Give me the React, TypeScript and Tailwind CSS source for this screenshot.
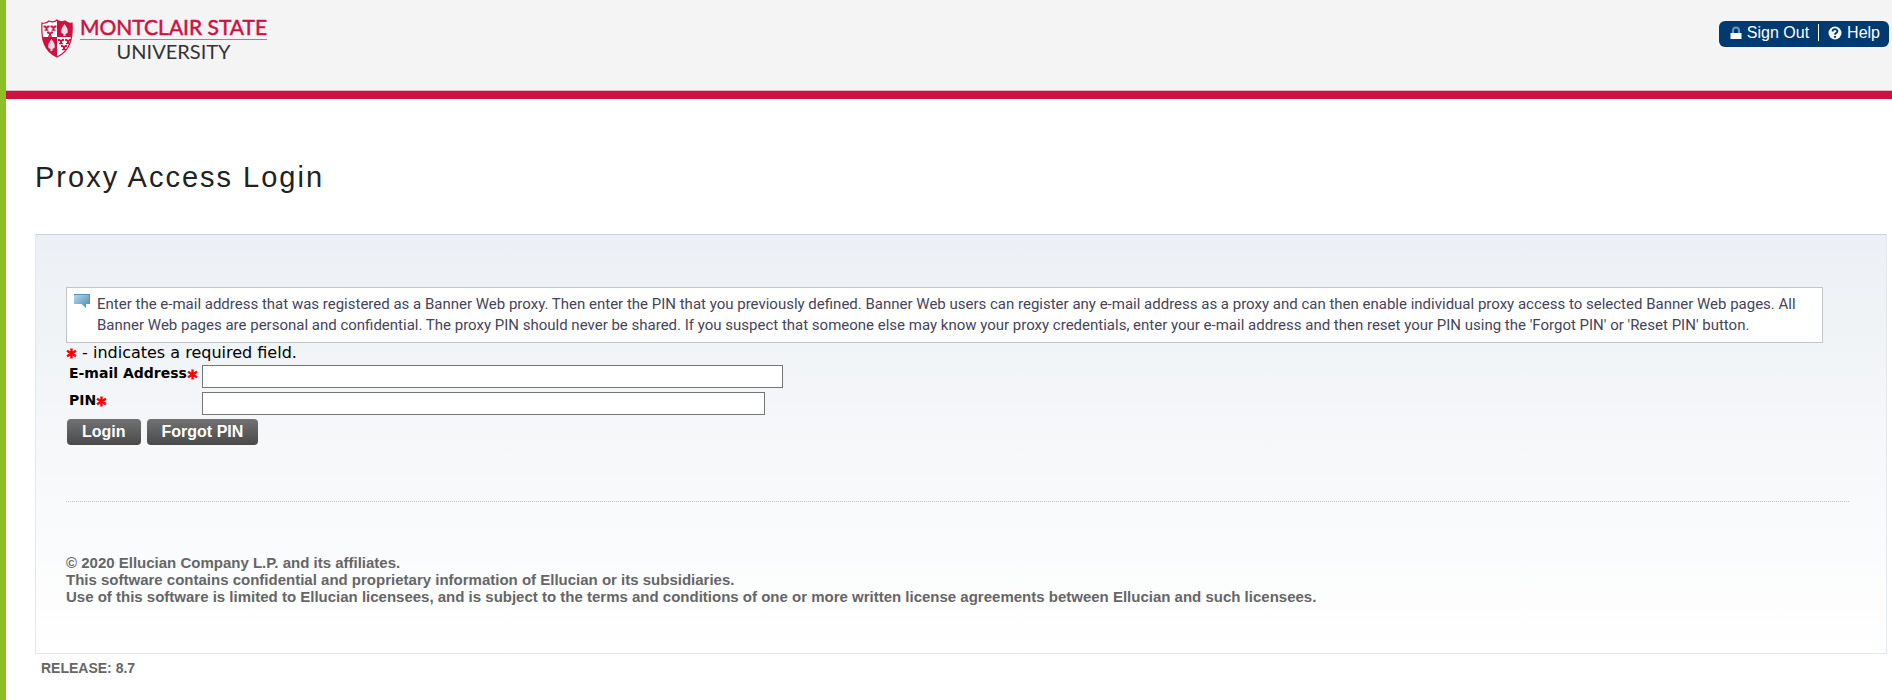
import React from "react";

function Shield() {
  return (
    <svg className="h-10 w-8 shrink-0" viewBox="0 0 32 40" aria-hidden="true">
      <defs>
        <clipPath id="shield">
          <path d="M1 4Q5 5 8 2Q13 4 16 1Q19 4 24 2Q27 5 31 4C32 20 29 32 16 38C3 32 0 20 1 4Z" />
        </clipPath>
        <g id="eagle">
          <path d="M0 0h2l.7 1h.6L4 0h2v1.800L4 2.500v1.500h1v1.300H1V4h1V2.500L0 1.800z" />
        </g>
      </defs>
      <g clipPath="url(#shield)">
        <path fill="#fff" d="M0 0h32v40H0z" />
        <path fill="#cf1141" d="M16 0h16v18H16zM0 18h16v22H0z" />
        <g fill="#cf1141">
          <use href="#eagle" x="2.500" y="6.500" />
          <use href="#eagle" x="9.500" y="6.500" />
          <use href="#eagle" x="6" y="12.500" />
          <use href="#eagle" x="17" y="20" />
          <use href="#eagle" x="24" y="20" />
          <use href="#eagle" x="20" y="26" />
        </g>
        <g fill="#fff" opacity=".85">
          <path d="M23.500 5c2 3 4 5 3 9l-2 1v2h-2v-2l-2-1c-1-4 1-6 3-9z" />
          <path d="M10.500 20c2 3 4 5 3 9l-2 1v2h-2v-2l-2-1c-1-4 1-6 3-9z" />
        </g>
      </g>
      <path
        fill="none"
        stroke="#cf1141"
        strokeWidth="1.200"
        d="M1 4Q5 5 8 2Q13 4 16 1Q19 4 24 2Q27 5 31 4C32 20 29 32 16 38C3 32 0 20 1 4Z"
      />
    </svg>
  );
}

function Logo() {
  return (
    <div className="flex items-start gap-[7px]">
      <Shield />
      <div className="-mt-1 flex flex-col items-center font-['Lato',sans-serif] whitespace-nowrap">
        <span className="border-b border-[#8c8c8c] text-[21px] leading-6 text-[#cf1141] [-webkit-text-stroke:0.5px_#cf1141]">
          MONTCLAIR STATE
        </span>
        <span className="text-[20px] leading-[23px] text-[#333333]">UNIVERSITY</span>
      </div>
    </div>
  );
}

function Required() {
  return (
    <svg className="inline-block size-[11px]" viewBox="0 0 11 11" role="img" aria-label="Required">
      <path
        stroke="#ff0000"
        strokeWidth="2.400"
        d="M5.500 0.500v10M1 2.800l9 5.400M10 2.800l-9 5.400"
      />
    </svg>
  );
}

function LockIcon() {
  return (
    <svg className="h-3.5 w-3" viewBox="0 0 12 14" aria-hidden="true">
      <path fill="none" stroke="#6d94bb" strokeWidth="2" d="M3 8V4.500a3 3 0 0 1 6 0v3.500" />
      <path fill="#fff" d="M.5 7h11v6H.5z" />
    </svg>
  );
}

function HelpIcon() {
  return (
    <svg className="size-3.5" viewBox="0 0 14 14" aria-hidden="true">
      <circle cx="7" cy="7" r="6.500" fill="#f4f8fc" />
      <path
        fill="none"
        stroke="#003a70"
        strokeWidth="1.900"
        d="M4.600 5.400C4.600 2.400 9.400 2.400 9.400 5.200 9.400 7 7 6.800 7 8.800"
      />
      <path fill="#003a70" d="M6 10h2v1.800H6z" />
    </svg>
  );
}

function NoteIcon() {
  return (
    <svg className="h-3.5 w-4 shrink-0" viewBox="0 0 16 14" aria-hidden="true">
      <defs>
        <linearGradient id="note" x1="0" y1="0" x2="1" y2="1">
          <stop offset="0" stopColor="#b9dcec" />
          <stop offset="1" stopColor="#4488b4" />
        </linearGradient>
      </defs>
      <path fill="url(#note)" d="M0 0h16v10h-4v4L7.500 10H0z" />
      <path fill="none" stroke="#5794b8" d="M0 .5h15.500V10" />
    </svg>
  );
}

const labelClass =
  "pl-[3px] text-left align-top font-bold text-sm leading-[17px] whitespace-nowrap";
const fieldClass = "block h-[23px] border border-[#767676] bg-white px-1 text-[13px]";
const buttonClass =
  "h-[26px] rounded-[4px] bg-linear-to-b from-[#727272] to-[#4a4a4a] px-[15px] font-['Liberation_Sans',sans-serif] text-base leading-[26px] font-bold text-white";

export default function App() {
  return (
    <div className="min-h-screen border-l-[6px] border-[#8cbf26] bg-white font-['Liberation_Sans',Arial,sans-serif]">
      <header className="border-b-8 border-[#cf1141] bg-[#f4f4f4]">
        <div className="flex h-[91px] items-start justify-between border-b border-[#e3b8c3] pr-[3px] pl-[35px]">
          <div className="pt-[19px]">
            <Logo />
          </div>
          <nav className="mt-[21px] flex h-[26px] items-start rounded-[6px] bg-[#003a70] pr-[9px] pl-[11px] text-base leading-6 text-white">
            <a href="#signout" className="flex items-center gap-[5px] pr-[9px]">
              <LockIcon />
              Sign Out
            </a>
            <span className="mt-[3px] h-[17px] w-px bg-white" />
            <a href="#help" className="flex items-center gap-[5px] pl-[9px]">
              <HelpIcon />
              Help
            </a>
          </nav>
        </div>
      </header>

      <main className="pr-[5px] pl-[29px]">
        <h1 className="pt-[61px] text-[29px] leading-[34px] tracking-[2px] text-[#222222]">
          Proxy Access Login
        </h1>

        <section className="mt-10 border border-[#e3e8ec] border-t-[#c8d5db] bg-linear-to-b from-[#ecf0f4] to-white pt-[52px] pr-[37px] pb-12 pl-[30px]">
          <div className="mr-[26px] flex gap-[7px] border border-[#c3c6c8] bg-white pt-[6px] pr-4 pb-[6px] pl-[7px]">
            <NoteIcon />
            <p className="font-['Roboto',sans-serif] text-[15px] leading-[21px] text-[#45455a]">
              Enter the e-mail address that was registered as a Banner Web proxy. Then enter the PIN
              that you previously defined. Banner Web users can register any e-mail address as a
              proxy and can then enable individual proxy access to selected Banner Web pages. All
              Banner Web pages are personal and confidential. The proxy PIN should never be shared.
              If you suspect that someone else may know your proxy credentials, enter your e-mail
              address and then reset your PIN using the 'Forgot PIN' or 'Reset PIN' button.
            </p>
          </div>

          <form
            className="font-['DejaVu_Sans',sans-serif] text-black"
            onSubmit={(e) => e.preventDefault()}
          >
            <p className="text-base leading-5">
              <Required /> - indicates a required field.
            </p>
            <div className="grid grid-cols-[136px_1fr] gap-y-1 pt-[2px]">
              <label htmlFor="email" className={labelClass}>
                E-mail Address
                <Required />
              </label>
              <input id="email" type="email" className={fieldClass + " w-[581px]"} />
              <label htmlFor="pin" className={labelClass}>
                PIN
                <Required />
              </label>
              <input id="pin" type="password" className={fieldClass + " w-[563px]"} />
            </div>
            <div className="flex gap-[6px] pt-1 pl-px">
              <button type="submit" className={buttonClass}>
                Login
              </button>
              <button type="button" className={buttonClass}>
                Forgot PIN
              </button>
            </div>
          </form>

          <hr className="mt-14 border-t border-dotted border-[#c4c4c4]" />

          <footer className="pt-[52px] text-[15px] leading-[17px] font-bold text-[#666666]">
            <p>© 2020 Ellucian Company L.P. and its affiliates.</p>
            <p>
              This software contains confidential and proprietary information of Ellucian or its
              subsidiaries.
            </p>
            <p>
              Use of this software is limited to Ellucian licensees, and is subject to the terms and
              conditions of one or more written license agreements between Ellucian and such
              licensees.
            </p>
          </footer>
        </section>
        <p className="pt-[6px] pl-[6px] text-sm leading-[17px] font-bold text-[#666666]">
          RELEASE: 8.7
        </p>
      </main>
    </div>
  );
}
